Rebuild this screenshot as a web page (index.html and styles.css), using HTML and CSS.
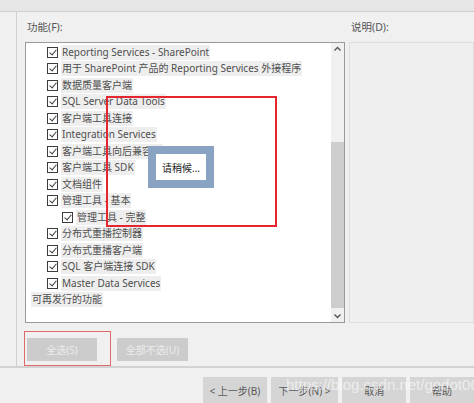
FILE: index.html
```html
<!DOCTYPE html>
<html>
<head>
    <meta charset="UTF-8">
    <title>功能选择</title>
    <link rel="stylesheet" href="styles.css">
</head>
<body>
    <div id="wizard">
        <div id="topBar"></div>

        <div id="main">
            <div id="gutter"></div>
            <div id="content">
                <div class="labels">
                    <span class="paneLabel featureLabel">功能(F):</span>
                    <span class="paneLabel">说明(D):</span>
                </div>

                <div class="panes">
                    <div class="listBox">
                        <div class="items">
                            <div class="item"><span class="box"></span><span class="text">Reporting Services - SharePoint</span></div>
                            <div class="item"><span class="box"></span><span class="text">用于 SharePoint 产品的 Reporting Services 外接程序</span></div>
                            <div class="item"><span class="box"></span><span class="text">数据质量客户端</span></div>
                            <div class="item"><span class="box"></span><span class="text">SQL Server Data Tools</span></div>
                            <div class="item"><span class="box"></span><span class="text">客户端工具连接</span></div>
                            <div class="item"><span class="box"></span><span class="text">Integration Services</span></div>
                            <div class="item"><span class="box"></span><span class="text">客户端工具向后兼容性</span></div>
                            <div class="item"><span class="box"></span><span class="text">客户端工具 SDK</span></div>
                            <div class="item"><span class="box"></span><span class="text">文档组件</span></div>
                            <div class="item"><span class="box"></span><span class="text">管理工具 - 基本</span></div>
                            <div class="item sub"><span class="box"></span><span class="text">管理工具 - 完整</span></div>
                            <div class="item"><span class="box"></span><span class="text">分布式重播控制器</span></div>
                            <div class="item"><span class="box"></span><span class="text">分布式重播客户端</span></div>
                            <div class="item"><span class="box"></span><span class="text">SQL 客户端连接 SDK</span></div>
                            <div class="item"><span class="box"></span><span class="text">Master Data Services</span></div>
                            <div class="item group"><span class="text">可再发行的功能</span></div>
                        </div>
                        <div class="scrollBar">
                            <svg class="arrow" width="13" height="12" viewBox="0 0 13 12"><path d="M3.5 7.5 L6.5 4.5 L9.5 7.5" fill="none" stroke="#555" stroke-width="1.4"/></svg>
                            <div class="track"><div class="thumb"></div></div>
                            <svg class="arrow" width="13" height="12" viewBox="0 0 13 12"><path d="M3.5 4.5 L6.5 7.5 L9.5 4.5" fill="none" stroke="#555" stroke-width="1.4"/></svg>
                        </div>
                    </div>
                    <div class="descPane"></div>
                </div>

                <div class="selectRow">
                    <div class="markFrame">
                        <button class="btn disabled">全选(S)</button>
                    </div>
                    <button class="btn disabled">全部不选(U)</button>
                </div>
            </div>
        </div>

        <div id="footer">
            <button class="btn nav">&lt; 上一步(B)</button>
            <button class="btn nav wide">下一步(N) &gt;</button>
            <button class="btn nav">取消</button>
            <button class="btn nav">帮助</button>
        </div>

        <!-- annotation box and the busy popup float over the list -->
        <div class="markBox"></div>
        <div class="busy"><div class="busyInner">请稍候...</div></div>
        <div class="watermark">https://blog.csdn.net/godot06</div>
    </div>
</body>
</html>
```

FILE: styles.css
```css
body {
    margin:0;
    background-color:#f0f0f0;
    font-family:"Noto Sans", "Noto Sans CJK SC", sans-serif;
    font-size:10px;
    color:#4f4f4f;
    overflow:hidden;
}
#wizard {
    position:relative;
    width:474px;
    height:403px;
    overflow:hidden;
    display:flex;
    flex-direction:column;
}
#topBar {
    height:11px;
    background-color:#e6e6e6;
    border-bottom:1px solid #d0d0d0;
}
#main {
    display:flex;
    height:359px;
    border-bottom:2px solid #d2d2d2;
}
#gutter {
    width:16px;
    border-right:1px solid #d0d0d0;
}
#content {
    flex:1;
    padding-left:8px;
    display:flex;
    flex-direction:column;
    overflow:hidden;
}
.labels {
    display:flex;
    height:30px;
    align-items:center;
}
.paneLabel {
    font-size:10.5px;
    color:#555;
}
.featureLabel {
    width:324px;
    padding-left:2px;
}
.panes {
    display:flex;
    gap:4px;
    height:281px;
}
.listBox {
    width:318px;
    display:flex;
    border:1px solid #9a9a9a;
    background-color:white;
}
.items {
    flex:1;
    padding-top:1px;
}
.item {
    display:flex;
    align-items:center;
    gap:3px;
    height:16.5px;
    padding-left:21px;
    white-space:nowrap;
}
.item.sub {
    padding-left:36px;
}
.item.group {
    padding-left:5px;
}
.text {
    background-color:#eeeeee;
    padding:0 1px;
    line-height:15px;
}
.box {
    position:relative;
    width:9px;
    height:9px;
    border:1px solid #3c3c3c;
    background-color:white;
}
.box::after {
    content:"";
    position:absolute;
    left:3px;
    top:0px;
    width:3px;
    height:6px;
    border-right:1.3px solid #3c3c3c;
    border-bottom:1.3px solid #3c3c3c;
    transform:rotate(40deg);
}
.scrollBar {
    width:13px;
    background-color:#f0f0f0;
    display:flex;
    flex-direction:column;
}
.arrow {
    display:block;
}
.track {
    flex:1;
    padding-top:87px;
    padding-bottom:2px;
    display:flex;
}
.thumb {
    flex:1;
    background-color:#cdcdcd;
}
.descPane {
    flex:1;
    border:1px solid #dedede;
    background-color:#efefef;
}
.selectRow {
    display:flex;
    align-items:flex-start;
    gap:6px;
    margin-top:8px;
    margin-left:-1px;
}
.markFrame {
    border:1px solid #e06a6a;
    padding:6px 13px 4px 2px;
}
.btn {
    font-family:inherit;
    font-size:10px;
    border:none;
    margin:0;
    padding:0;
    height:23px;
    width:70px;
    background-color:#cccccc;
}
.btn.disabled {
    color:#ececec;
}
.selectRow > .btn {
    margin-top:7px;
    width:71px;
}
#footer {
    display:flex;
    gap:4px;
    padding:9px 0 0 203px;
}
.btn.nav {
    width:71px;
    height:26px;
    background-color:#d5d5d5;
    color:#5a5a5a;
}
.btn.nav.wide {
    width:75px;
}
.markBox {
    position:absolute;
    left:106px;
    top:96px;
    width:167px;
    height:127px;
    border:2px solid #e5262e;
}
.busy {
    position:absolute;
    left:148px;
    top:146px;
    width:50px;
    height:26px;
    padding:8px;
    background-color:#8ba3c3;
}
.busyInner {
    height:26px;
    background-color:white;
    display:flex;
    align-items:center;
    justify-content:center;
    font-size:10px;
    color:#222;
}
.watermark {
    position:absolute;
    left:286px;
    top:376px;
    font-family:"Liberation Sans", sans-serif;
    font-size:15px;
    color:rgba(255, 255, 255, 0.6);
}
```
